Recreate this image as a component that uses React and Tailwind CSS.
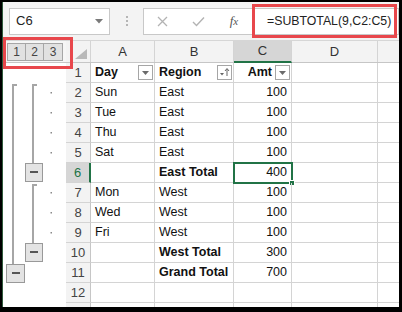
import React from "react";

const FONT = { fontFamily: '"Liberation Sans", Arial, sans-serif' };

function FilterBtn({ sort }) {
  return (
    <div className="w-[15px] h-[15px] border border-[#a6a6a6] bg-white flex items-center justify-center shrink-0">
      {sort ? (
        <svg width="13" height="13" viewBox="0 0 13 13">
          <path d="M2 7 L6 7 L4 9.5 Z" fill="#666" />
          <rect x="8.5" y="3" width="1" height="7" fill="#666" />
          <path d="M7 5 L9 2.5 L11 5" fill="none" stroke="#666" strokeWidth="1" />
        </svg>
      ) : (
        <svg width="9" height="6" viewBox="0 0 9 6">
          <path d="M1 1 L8 1 L4.5 5 Z" fill="#6b6b6b" />
        </svg>
      )}
    </div>
  );
}

const rows = [
  { n: "1", a: "Day", b: "Region", c: "Amt", header: true },
  { n: "2", a: "Sun", b: "East", c: "100" },
  { n: "3", a: "Tue", b: "East", c: "100" },
  { n: "4", a: "Thu", b: "East", c: "100" },
  { n: "5", a: "Sat", b: "East", c: "100" },
  { n: "6", a: "", b: "East Total", c: "400", bold: true, sel: true },
  { n: "7", a: "Mon", b: "West", c: "100" },
  { n: "8", a: "Wed", b: "West", c: "100" },
  { n: "9", a: "Fri", b: "West", c: "100" },
  { n: "10", a: "", b: "West Total", c: "300", bold: true },
  { n: "11", a: "", b: "Grand Total", c: "700", bold: true },
  { n: "12", a: "", b: "", c: "" },
  { n: "", a: "", b: "", c: "" },
];

function OutlineSvg() {
  const g = "#a6a6a6";
  const dots = [2, 3, 4, 5, 7, 8, 9];
  const Btn = ({ x, y, w, h }) => (
    <g>
      <rect x={x + 0.5} y={y + 0.5} width={w - 1} height={h - 1} fill="#e3e3e3" stroke="#999" />
      <rect x={x + Math.round(w / 2) - 4} y={y + Math.floor(h / 2) - 1} width="8" height="2" fill="#555" />
    </g>
  );
  return (
    <svg width="63" height="244" viewBox="0 0 63 244" className="block">
      <rect x="9" y="21" width="2" height="180" fill={g} />
      <rect x="9" y="21" width="5" height="2" fill={g} />
      <Btn x={3} y={201} w={19} h={19} />
      <rect x="29" y="21" width="2" height="79" fill={g} />
      <rect x="29" y="21" width="5" height="2" fill={g} />
      <Btn x={22} y={100} w={18} h={19} />
      <rect x="29" y="121" width="2" height="59" fill={g} />
      <rect x="29" y="121" width="5" height="2" fill={g} />
      <Btn x={22} y={180} w={18} h={19} />
      {dots.map((r) => (
        <rect key={r} x="47.5" y={20 * (r - 1) + 9} width="1.5" height="1.5" fill="#8a8a8a" />
      ))}
    </svg>
  );
}

export default function App() {
  return (
    <div className="w-[402px] h-[312px] bg-black pl-[2px] pt-[2px] pr-[3px] pb-[5px] overflow-hidden" style={FONT}>
      <div className="relative w-full h-full bg-white flex flex-col border-l border-[#2f5a3c] overflow-hidden">
        {/* formula bar */}
        <div className="h-[39px] shrink-0 bg-[#f3f3f3] border-b border-[#d6d6d6] flex items-center">
          <div className="ml-[6px] w-[101px] h-[27px] bg-white border border-[#c8c8c8] flex items-center justify-between pl-[6px] pr-[6px]">
            <span className="text-[13px] text-[#222]">C6</span>
            <svg width="8" height="5" viewBox="0 0 8 5">
              <path d="M0 0 L8 0 L4 4.5 Z" fill="#7a7a7a" />
            </svg>
          </div>
          <div className="w-[33px] flex flex-col items-center gap-[2px]">
            <span className="w-[2px] h-[2px] bg-[#b5b5b5]" />
            <span className="w-[2px] h-[2px] bg-[#b5b5b5]" />
            <span className="w-[2px] h-[2px] bg-[#b5b5b5]" />
          </div>
          <div className="flex-1 h-[27px] bg-white border border-[#c8c8c8] flex items-center">
            <div className="w-[36px] flex justify-center">
              <svg width="11" height="11" viewBox="0 0 11 11">
                <path d="M1 1 L10 10 M10 1 L1 10" stroke="#b3b3b3" strokeWidth="1.3" />
              </svg>
            </div>
            <div className="w-[36px] flex justify-center">
              <svg width="13" height="11" viewBox="0 0 13 11">
                <path d="M1 6 L4.5 9.5 L12 1.5" fill="none" stroke="#b3b3b3" strokeWidth="1.4" />
              </svg>
            </div>
            <div className="w-[36px] flex justify-center">
              <span className="text-[13px] italic text-[#555]" style={{ fontFamily: '"Liberation Serif", serif' }}>
                f<span className="text-[11px]">x</span>
              </span>
            </div>
            <span className="ml-[15px] text-[12.3px] text-[#222] whitespace-nowrap">=SUBTOTAL(9,C2:C5)</span>
          </div>
        </div>

        {/* header row */}
        <div className="h-[22px] shrink-0 flex bg-[#f3f3f3] border-b border-[#c6c6c6]">
          <div className="w-[63px] shrink-0 bg-[#f6f6f6] flex items-center pl-[4px]">
            <div className="flex border border-[#a6a6a6] h-[18px]">
              {["1", "2", "3"].map((t, i) => (
                <div
                  key={t}
                  className={`w-[18px] h-full bg-[#e1e1e1] flex items-center justify-center text-[12px] text-[#444] ${i < 2 ? "border-r border-[#a6a6a6]" : ""}`}
                >
                  {t}
                </div>
              ))}
            </div>
          </div>
          <div className="w-[25px] shrink-0 border-r border-[#d4d4d4] relative">
            <svg width="12" height="10" viewBox="0 0 12 10" className="absolute right-[3px] bottom-[3px]">
              <path d="M12 0 L12 10 L0 10 Z" fill="#b9b9b9" />
            </svg>
          </div>
          <div className="w-[64px] shrink-0 border-r border-[#d4d4d4] flex items-center justify-center text-[13px] text-[#333]">A</div>
          <div className="w-[79px] shrink-0 border-r border-[#d4d4d4] flex items-center justify-center text-[13px] text-[#333]">B</div>
          <div className="w-[58px] shrink-0 border-r border-[#d4d4d4] bg-[#d6d6d6] border-b-2 border-b-[#217346] flex items-center justify-center text-[13px] text-[#333] h-[22px]">C</div>
          <div className="w-[86px] shrink-0 border-r border-[#d4d4d4] flex items-center justify-center text-[13px] text-[#333]">D</div>
          <div className="flex-1" />
        </div>

        {/* body */}
        <div className="flex flex-1">
          <div className="w-[63px] shrink-0 bg-white">
            <OutlineSvg />
          </div>
          <div className="flex-1 flex flex-col">
            {rows.map((r, idx) => (
              <div key={idx} className="h-[20px] shrink-0 flex text-[12.5px] text-[#111]">
                <div
                  className={`w-[25px] shrink-0 border-b border-[#d4d4d4] flex items-center justify-center text-[13px] ${
                    r.sel
                      ? "bg-[#d6d6d6] text-[#217346] border-r-2 border-r-[#217346]"
                      : "bg-[#f3f3f3] text-[#444] border-r border-r-[#c6c6c6]"
                  }`}
                >
                  {r.n}
                </div>
                <div className={`w-[64px] shrink-0 border-r border-b border-[#d4d4d4] flex items-center ${r.header ? "justify-between pl-[4px] pr-[1px] font-bold" : "pl-[4px]"}`}>
                  <span>{r.a}</span>
                  {r.header && <FilterBtn />}
                </div>
                <div className={`w-[79px] shrink-0 border-r border-b border-[#d4d4d4] flex items-center ${r.header || r.bold ? "font-bold" : ""} ${r.header ? "justify-between pl-[4px] pr-[1px]" : "pl-[4px]"}`}>
                  <span className="whitespace-nowrap">{r.b}</span>
                  {r.header && <FilterBtn sort />}
                </div>
                <div className={`relative w-[58px] shrink-0 border-r border-b border-[#d4d4d4] flex items-center ${r.header ? "justify-end gap-[3px] pr-[1px] font-bold" : "justify-end pr-[4px]"}`}>
                  <span>{r.c}</span>
                  {r.header && <FilterBtn />}
                  {r.sel && (
                    <>
                      <div className="absolute -left-[1px] -top-[1px] w-[60px] h-[22px] border-2 border-[#217346]" />
                      <div className="absolute -right-[4px] -bottom-[4px] w-[6px] h-[6px] bg-[#217346] border border-white" />
                    </>
                  )}
                </div>
                <div className="w-[86px] shrink-0 border-r border-b border-[#d4d4d4]" />
                <div className="flex-1 border-b border-[#d4d4d4]" />
              </div>
            ))}
          </div>
        </div>

        {/* red highlight boxes */}
        <div className="absolute left-0 top-[35px] w-[70px] h-[32px] border-[3px] border-[#e8474c]" />
        <div className="absolute left-[249px] top-[2px] w-[145px] h-[34px] border-[3px] border-[#e8474c]" />
      </div>
    </div>
  );
}
